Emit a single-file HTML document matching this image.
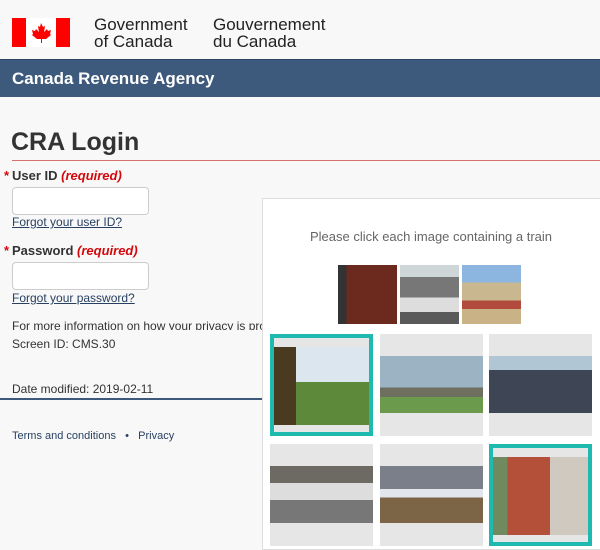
<!DOCTYPE html>
<html><head><style>
*{margin:0;padding:0;box-sizing:border-box}
body{width:600px;height:550px;overflow:hidden;background:#f8f8f8;font-family:"Liberation Sans",sans-serif;position:relative;color:#333}
.a{position:absolute}
.gov{font-size:17px;line-height:17px;color:#222}
.lbl{font-size:13px;font-weight:bold;color:#333}
.lbl i{color:#d3080c}
.lbl b{color:#d3080c;position:absolute;left:-8px}
.in{width:137px;height:28px;border:1px solid #ccc;border-radius:4px;background:#fff}
.lnk{font-size:12px;color:#284162;text-decoration:underline}
.t{font-size:12px;color:#333}
.tile{position:absolute;width:103px;height:102px;background:#e6e6e6}
.sel{border:4px solid #1ebab0}
.img{position:absolute;left:0;right:0}
</style></head><body>
<div class="a" style="left:0;top:0;width:600px;height:58px;background:#f8f8f8"></div>
<svg class="a" style="left:12px;top:18px" width="58" height="29" viewBox="0 0 58 29">
<rect x="0" y="0" width="14" height="29" fill="#f00"/><rect x="44" y="0" width="14" height="29" fill="#f00"/><rect x="14" width="30" height="29" fill="#fff"/>
<path d="M29 5l2 4 2-1-1 6 3-3 1 2 3-1-1 4 1 1-5 4h-4v4h-1v-4h-4l-5-4 1-1-1-4 3 1 1-2 3 3-1-6 2 1z" fill="#f00"/>
</svg>
<div class="a gov" style="left:94px;top:16px">Government<br>of Canada</div>
<div class="a gov" style="left:213px;top:16px">Gouvernement<br>du Canada</div>
<div class="a" style="left:0;top:59px;width:600px;height:38px;background:#3d597c;border-top:1px solid #2b4266"></div>
<div class="a" style="left:12px;top:69px;color:#fff;font-size:17px;font-weight:bold">Canada Revenue Agency</div>
<div class="a" style="left:11px;top:128px;font-size:25px;font-weight:bold;color:#333">CRA Login</div>
<div class="a" style="left:12px;top:160px;width:588px;height:1px;background:#d97070"></div>
<div class="a lbl" style="left:12px;top:168px"><b>*</b>User ID <i>(required)</i></div>
<div class="a in" style="left:12px;top:187px"></div>
<div class="a lnk" style="left:12px;top:215px">Forgot your user ID?</div>
<div class="a lbl" style="left:12px;top:243px"><b>*</b>Password <i>(required)</i></div>
<div class="a in" style="left:12px;top:262px"></div>
<div class="a lnk" style="left:12px;top:291px">Forgot your password?</div>
<div class="a t" style="left:12px;top:319px;width:250px;overflow:hidden;white-space:nowrap;height:11px">For more information on how your privacy is protected</div>
<div class="a t" style="left:12px;top:337px">Screen ID: CMS.30</div>
<div class="a t" style="left:12px;top:382px">Date modified: 2019-02-11</div>
<div class="a" style="left:0;top:398px;width:262px;height:2px;background:#3d597c"></div>
<div class="a" style="left:12px;top:430px;font-size:11px;color:#284162">Terms and conditions &nbsp;&nbsp;•&nbsp;&nbsp; Privacy</div>

<div class="a" style="left:262px;top:198px;width:338px;height:352px;background:#fff;border:1px solid #ddd;border-right:none"></div>
<div class="a" style="left:262px;top:229px;width:338px;text-align:center;font-size:13px;color:#666">Please click each image containing a train</div>
<div class="a" style="left:338px;top:265px;width:59px;height:59px;background:linear-gradient(90deg,#333 0 14%,#6b2a1d 14%);"></div>
<div class="a" style="left:400px;top:265px;width:59px;height:59px;background:linear-gradient(#cfd6d8 0 20%,#777 20% 55%,#ddd 55% 80%,#5a5a5a 80%)"></div>
<div class="a" style="left:462px;top:265px;width:59px;height:59px;background:linear-gradient(#8cb6e0 0 30%,#c9b88f 30% 60%,#b24a3d 60% 75%,#c8b286 75%)"></div>

<div class="tile sel" style="left:270px;top:334px"><div class="img" style="top:9px;height:78px;background:linear-gradient(#dbe6ee 0 45%,#5c8a3a 45%)"><div style="width:22px;height:100%;background:#4a3a20"></div></div></div>
<div class="tile" style="left:380px;top:334px"><div class="img" style="top:22px;height:57px;background:linear-gradient(#9bb3c2 0 55%,#6f6f5f 55% 72%,#6c9a4c 72%)"></div></div>
<div class="tile" style="left:489px;top:334px"><div class="img" style="top:22px;height:57px;background:linear-gradient(#b0c6d4 0 25%,#3e4656 25%)"></div></div>
<div class="tile" style="left:270px;top:444px"><div class="img" style="top:22px;height:57px;background:linear-gradient(#6d6a64 0 30%,#ddd 30% 60%,#777 60%)"></div></div>
<div class="tile" style="left:380px;top:444px"><div class="img" style="top:22px;height:57px;background:linear-gradient(#7a7f8a 0 40%,#e2e6ec 40% 55%,#7c6447 55%)"></div></div>
<div class="tile sel" style="left:489px;top:444px"><div class="img" style="top:9px;height:78px;background:linear-gradient(90deg,#6e8a5e 0 15%,#b4503a 15% 60%,#cfc9c0 60%)"></div></div>
</body></html>
